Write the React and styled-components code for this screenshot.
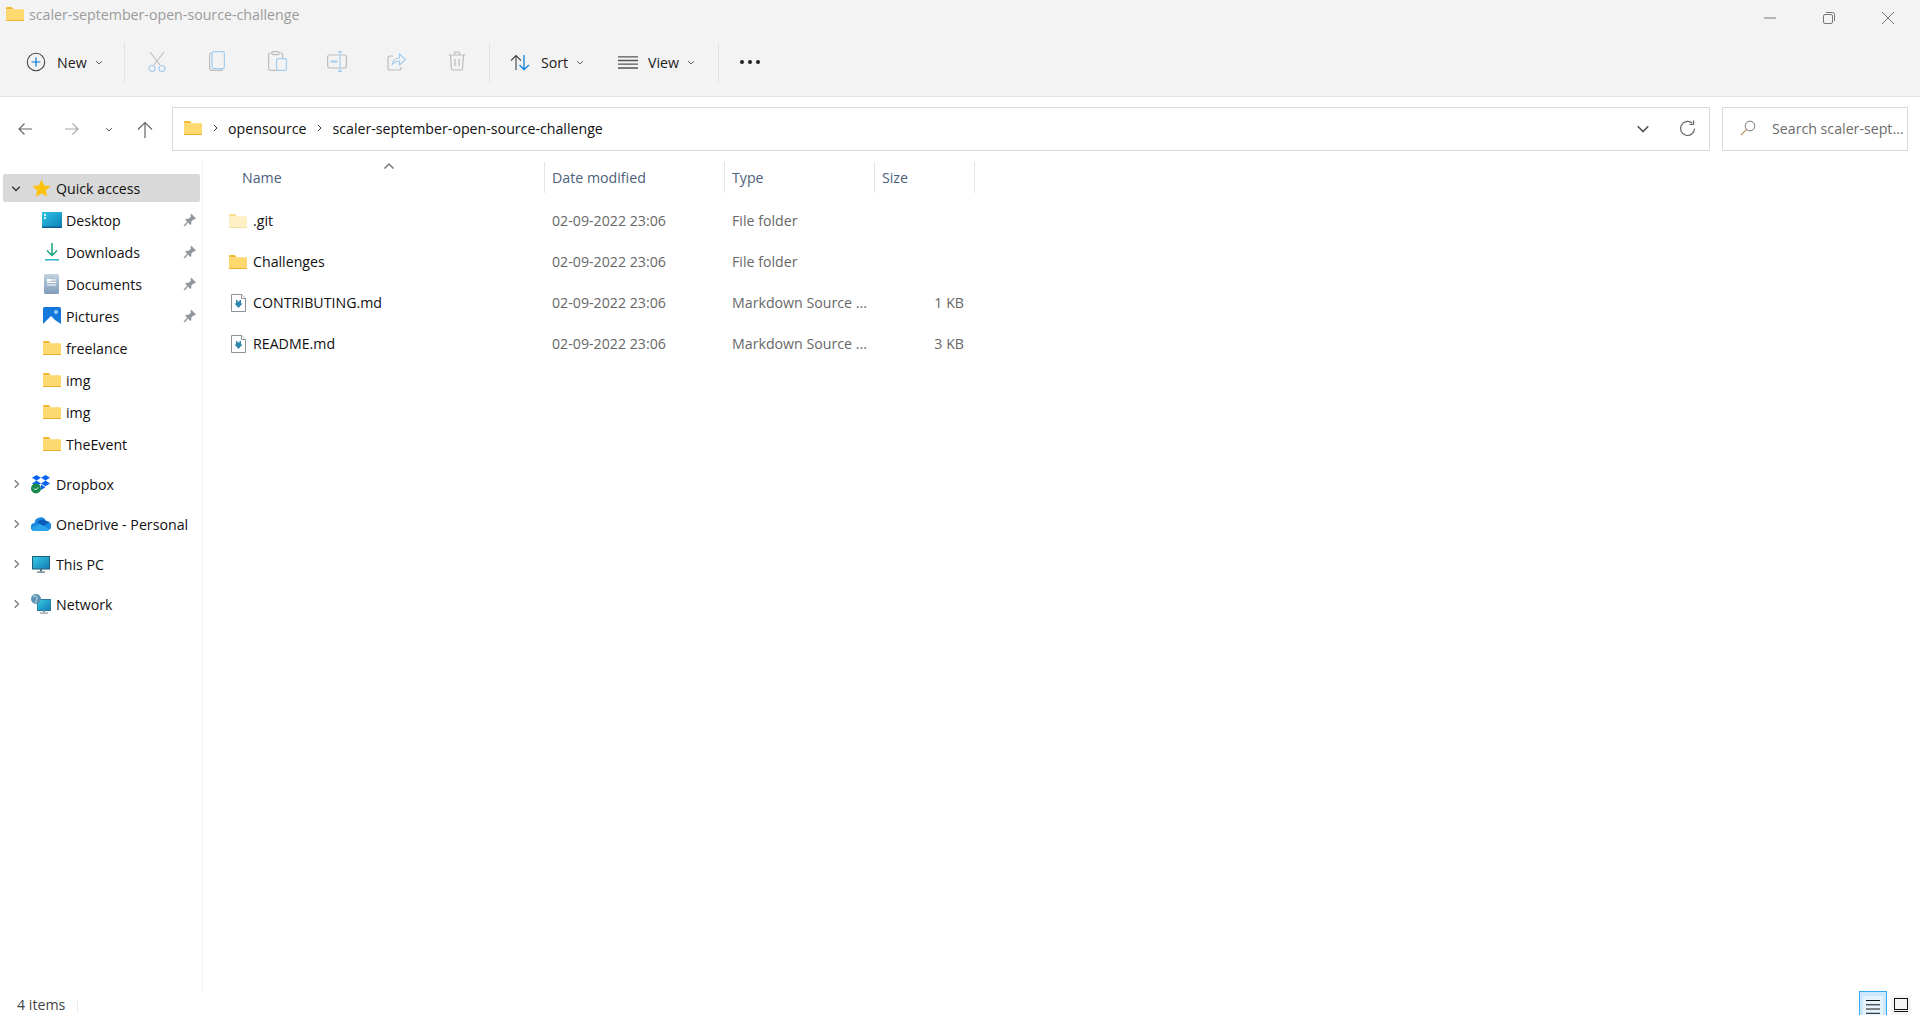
import styled, { createGlobalStyle } from 'styled-components';

const GlobalStyle = createGlobalStyle`
  html, body { margin: 0; padding: 0; background: #fff; }
  * { box-sizing: border-box; }
`;

const Window = styled.div`
  width: 1920px;
  height: 1015px;
  display: flex;
  flex-direction: column;
  overflow: hidden;
  background: #fff;
  font-family: "Open Sans", "Noto Sans", sans-serif;
  font-size: 14.2px;
  color: #111;
`;

const Chrome = styled.div`
  height: 97px;
  flex: none;
  display: flex;
  flex-direction: column;
  background: #f3f3f3;
  border-bottom: 1px solid #e1e1e1;
`;

const TitleBar = styled.div`
  height: 30px;
  flex: none;
  display: flex;
  align-items: center;
  padding-left: 6px;
  padding-bottom: 2px;
  gap: 5px;
  color: #9b9b9b;
`;

const TitleText = styled.span`
  flex: 1;
`;

const WindowButtons = styled.div`
  display: flex;
  align-items: center;
  padding-right: 26px;
  gap: 47px;
  margin-top: 8px;
`;

const Toolbar = styled.div`
  flex: 1;
  display: flex;
  align-items: center;
  padding-bottom: 2px;
`;

const Separator = styled.div`
  width: 1px;
  height: 39px;
  background: #e2e2e2;
`;

const ToolButton = styled.div`
  display: flex;
  align-items: center;
  flex: none;
  width: ${p => p.$width}px;
  padding-left: ${p => p.$pad}px;
`;

const ToolLabel = styled.span`
  margin-left: ${p => p.$gap}px;
  width: ${p => p.$width}px;
  color: #1b1b1b;
`;

const DisabledTool = styled.div`
  width: 60px;
  flex: none;
  display: flex;
  justify-content: center;
`;

const DisabledGroup = styled.div`
  display: flex;
  margin-left: 2px;
  margin-right: 2px;
`;

const Dots = styled.div`
  display: flex;
  gap: 4px;
  margin-left: 21px;
`;

const Dot = styled.span`
  width: 4px;
  height: 4px;
  border-radius: 50%;
  background: #222;
`;

const NavBar = styled.div`
  height: 65px;
  flex: none;
  display: flex;
  align-items: flex-start;
  padding-top: 10px;
`;

const NavButtons = styled.div`
  width: 172px;
  height: 44px;
  flex: none;
  display: grid;
  grid-template-columns: 50px 44px 30px 42px;
  align-items: center;
`;

const NavSlot = styled.div`
  display: flex;
  justify-content: center;
`;

const AddressBox = styled.div`
  width: 1538px;
  height: 44px;
  flex: none;
  display: flex;
  align-items: center;
  padding: 0 13px 2px 11px;
  border: 1px solid #d9d9d9;
  background: #fff;
`;

const Crumb = styled.span`
  color: #111;
`;

const CrumbSep = styled.span`
  display: flex;
  width: 26px;
  justify-content: center;
`;

const AddressEnd = styled.div`
  margin-left: auto;
  display: flex;
  align-items: center;
  gap: 29px;
`;

const SearchBox = styled.div`
  width: 186px;
  height: 44px;
  flex: none;
  margin-left: 12px;
  display: flex;
  align-items: center;
  padding: 0 0 2px 17px;
  gap: 16px;
  border: 1px solid #d9d9d9;
  color: #6c6c6c;
  white-space: nowrap;
`;

const Body = styled.div`
  flex: 1;
  min-height: 0;
  display: flex;
`;

const Sidebar = styled.nav`
  width: 203px;
  flex: none;
  padding-top: 10px;
  border-right: 1px solid #f0f0f0;
`;

const QuickRow = styled.div`
  height: 28px;
  margin: 2px 2px 2px 3px;
  border-radius: 2px;
  background: #d9d9d9;
  display: flex;
  align-items: center;
  padding-left: 7px;
`;

const TreeRow = styled.div`
  height: 40px;
  display: flex;
  align-items: center;
  padding-left: 10px;
`;

const Arrow = styled.span`
  width: 12px;
  display: flex;
  justify-content: center;
  flex: none;
`;

const TreeIcon = styled.span`
  width: 22px;
  margin-left: 8px;
  margin-right: 4px;
  display: flex;
  justify-content: center;
  flex: none;
`;

const PinnedRow = styled.div`
  height: 32px;
  display: flex;
  align-items: center;
  padding-left: 41px;
`;

const PinnedIcon = styled.span`
  width: 21px;
  margin-right: 4px;
  display: flex;
  justify-content: center;
  flex: none;
`;

const RowLabel = styled.span`
  flex: 1;
`;

const PinSlot = styled.span`
  display: flex;
  margin-right: 5px;
`;

const TreeGroup = styled.div`
  margin-top: 4px;
`;

const Files = styled.main`
  flex: 1;
  position: relative;
`;

const SortMark = styled.span`
  position: absolute;
  left: 180px;
  top: -1px;
  display: flex;
`;

const HeaderRow = styled.div`
  display: grid;
  grid-template-columns: 341px 180px 150px 100px 1px;
  height: 31px;
  margin-bottom: 7px;
  color: #4c607a;
`;

const HeaderCell = styled.div`
  display: flex;
  align-items: center;
  padding-left: ${p => p.$pad || 7}px;
  border-left: ${p => (p.$bare ? 'none' : '1px solid #e5e5e5')};
`;

const FileRow = styled.div`
  display: grid;
  grid-template-columns: 341px 180px 150px 100px;
  height: 41px;
  align-items: center;
`;

const NameCell = styled.div`
  display: flex;
  align-items: center;
  padding-left: 26px;
  gap: 6px;
  color: #111;
`;

const FileIcon = styled.span`
  width: 18px;
  display: flex;
  justify-content: center;
`;

const DataCell = styled.div`
  padding-left: 8px;
  color: #676767;
  white-space: nowrap;
`;

const SizeCell = styled.div`
  text-align: right;
  padding-right: 10px;
  color: #676767;
`;

const StatusBar = styled.footer`
  height: 25px;
  flex: none;
  display: flex;
  align-items: flex-start;
  padding-left: 17px;
  color: #444;
`;

const StatusText = styled.span`
  margin-top: 5px;
`;

const StatusDivider = styled.span`
  width: 1px;
  height: 14px;
  background: #eee;
  margin: 9px 0 0 12px;
`;

const ViewToggles = styled.div`
  margin-left: auto;
  margin-top: 1px;
  display: flex;
  gap: 4px;
  padding-right: 9px;
`;

const ActiveToggle = styled.div`
  width: 28px;
  height: 26px;
  display: flex;
  justify-content: center;
  padding-top: 4px;
  background: #cce8ff;
  border: 1px solid #3aa8ec;
`;

const ToggleInner = styled.div`
  width: 20px;
  height: 22px;
  display: flex;
  justify-content: center;
  padding-top: 3px;
  background: #e5f3ff;
`;

const PlainToggle = styled.div`
  width: 20px;
  height: 26px;
  margin-top: 4px;
  display: flex;
  justify-content: center;
  padding-top: 3px;
  background: #f5f5f5;
`;

const Svg = ({ w, h, children, box }) => (
  <svg width={w} height={h} viewBox={box || `0 0 ${w} ${h}`} fill="none">
    {children}
  </svg>
);

const chevronPaths = {
  down: 'M1 3l3 3 3-3',
  right: 'M3 1l3 3-3 3',
  up: 'M1 5l3-3 3 3',
};

const Chevron = ({ dir = 'down', size = 8, color = '#666', width = 1 }) => (
  <Svg w={size} h={size} box="0 0 8 8">
    <path d={chevronPaths[dir]} stroke={color} strokeWidth={width} />
  </Svg>
);

const Folder = ({ pale, w = 18, h = 14 }) => (
  <Svg w={w} h={h} box="0 0 18 14">
    <path d="M0 1.2C0 .5.5 0 1.2 0h4.6l2 2.2H0z" fill={pale ? '#f8dc8e' : '#f4b62c'} />
    <rect y="2.2" width="18" height="11.8" rx="0.6" fill={pale ? '#fff0c4' : '#fdd96f'} />
    <rect y="13" width="18" height="1" fill={pale ? '#f7dfa0' : '#eeb031'} />
  </Svg>
);

const MdFile = () => (
  <Svg w={15} h={18}>
    <path d="M.5.5h10.2l3.800 3.800v13.200H.5z" fill="#fff" stroke="#8a9299" />
    <path d="M10.500.5v4h4" stroke="#8a9299" fill="#fff" />
    <path d="M5 6h1.500v1.500h2V6H10v3.500h1.500L7.500 14l-4-4.500H5z" fill="#2f86ad" />
  </Svg>
);

const Pin = () => (
  <Svg w={14} h={14}>
    <path d="M8.400.8l4.600 4.600-1.200 1-1-.2-2.600 2.600.2 2.200-1 1L2.200 6.800l1-1 2.200.2L8 3.400l-.6-1.400z" fill="#8f969d" />
    <path d="M4.600 9.200L1 13" stroke="#8f969d" strokeWidth="1.300" />
  </Svg>
);

const Star = () => (
  <Svg w={19} h={18}>
    <path d="M9.500.5l2.700 5.900 6.400.7-4.800 4.300 1.400 6.300-5.700-3.300-5.700 3.300 1.400-6.300L.4 7.100l6.400-.7z" fill="#fdc20f" />
  </Svg>
);

const DesktopIcon = () => (
  <Svg w={20} h={16}>
    <defs>
      <linearGradient id="desk" x1="0" y1="0" x2="1" y2="1">
        <stop offset="0" stopColor="#2fc4e6" />
        <stop offset="1" stopColor="#0b7fb5" />
      </linearGradient>
    </defs>
    <rect width="20" height="16" rx="1" fill="url(#desk)" />
    <rect y="14.500" width="20" height="1.500" fill="#0f5f93" />
    <rect x="2" y="2" width="2" height="2" fill="#d8f3fb" />
    <rect x="2" y="5" width="2" height="2" fill="#d8f3fb" />
  </Svg>
);

const DownloadIcon = () => (
  <Svg w={16} h={20}>
    <path d="M8 1v12M3 8.500l5 5 5-5" stroke="#17a57c" strokeWidth="1.500" />
    <rect x="1" y="17" width="14" height="1.500" fill="#2ab5c6" />
  </Svg>
);

const DocumentIcon = () => (
  <Svg w={15} h={20}>
    <defs>
      <linearGradient id="docg" x1="0" y1="0" x2="0" y2="1">
        <stop offset="0" stopColor="#c3d2e2" />
        <stop offset="1" stopColor="#7f9cba" />
      </linearGradient>
    </defs>
    <rect width="15" height="20" rx="1.500" fill="url(#docg)" />
    <path d="M3 6h9M3 8.500h9M3 11h9" stroke="#fff" />
    <rect x="3" y="5" width="4" height="2.500" fill="#fff" />
  </Svg>
);

const PicturesIcon = () => (
  <Svg w={18} h={18}>
    <rect width="18" height="18" rx="1.500" fill="#1478dc" />
    <circle cx="13" cy="5" r="2" fill="#8fd0fa" />
    <path d="M0 17l8-8 4 4 6 4v1H0z" fill="#fff" />
  </Svg>
);

const DropboxIcon = () => (
  <Svg w={20} h={19}>
    <path d="M5.500 0l4.500 2.800-4.500 2.800L1 2.800zM14.500 0L19 2.800l-4.500 2.800L10 2.800zM5.500 5.600L10 8.400l-4.500 2.800L1 8.400zM14.500 5.600L19 8.400l-4.500 2.800L10 8.400zM10 9.500l4.500 2.800L10 15z" fill="#0a62f0" />
    <circle cx="5" cy="13.500" r="5" fill="#1a8a4c" />
    <path d="M3 13.500l1.500 1.500 2.500-2.500" stroke="#fff" />
  </Svg>
);

const CloudIcon = () => (
  <Svg w={20} h={14}>
    <path d="M4 14a4 4 0 01-.5-8A6 6 0 0115 4a4.500 4.500 0 01.500 10z" fill="#1a8ae0" />
    <path d="M6 5.500A6 6 0 0115 4a4 4 0 013 1.500L12 9z" fill="#0b5cb8" />
    <path d="M4 14a4 4 0 01-3-3l8-4 9 5c-.5 1-1.500 2-2.500 2z" fill="#2aa5ec" />
  </Svg>
);

const MonitorIcon = () => (
  <Svg w={18} h={17}>
    <defs>
      <linearGradient id="mon" x1="0" y1="0" x2="1" y2="1">
        <stop offset="0" stopColor="#35cfe6" />
        <stop offset="1" stopColor="#1379b5" />
      </linearGradient>
    </defs>
    <rect x=".5" y=".5" width="17" height="12.500" fill="url(#mon)" stroke="#225c7d" />
    <rect x="8" y="13" width="2" height="2.500" fill="#58707f" />
    <rect x="5" y="15.500" width="8" height="1.200" fill="#58707f" />
  </Svg>
);

const NetworkIcon = () => (
  <Svg w={20} h={20}>
    <defs>
      <linearGradient id="net" x1="0" y1="0" x2="1" y2="1">
        <stop offset="0" stopColor="#35cfe6" />
        <stop offset="1" stopColor="#1379b5" />
      </linearGradient>
    </defs>
    <rect x="6.500" y="5.500" width="13" height="11" fill="url(#net)" stroke="#2a7da3" />
    <rect x="12" y="16.500" width="2" height="2" fill="#8a98a2" />
    <rect x="9" y="18.500" width="8" height="1.200" fill="#8a98a2" />
    <circle cx="5" cy="5" r="5" fill="#5c93b5" />
    <path d="M2 3c2-2 4-1 4 1s-2 3-1 5" stroke="#d5e6f0" />
  </Svg>
);

const NewIcon = () => (
  <Svg w={20} h={20}>
    <circle cx="10" cy="10" r="8.700" stroke="#444" strokeWidth="1.100" />
    <path d="M10 5.500v9M5.500 10h9" stroke="#0078d4" strokeWidth="1.200" />
  </Svg>
);

const GRAY = '#bdbdbd';
const PALE = '#a5cdee';

const CutIcon = () => (
  <Svg w={20} h={22}>
    <path d="M3 1l10 13M17 1L7 14" stroke={GRAY} strokeWidth="1.100" />
    <circle cx="5" cy="17.500" r="3" stroke={PALE} strokeWidth="1.200" />
    <circle cx="15" cy="17.500" r="3" stroke={PALE} strokeWidth="1.200" />
  </Svg>
);

const CopyIcon = () => (
  <Svg w={16} h={20}>
    <rect x=".6" y="2" width="13" height="17.400" rx="2" stroke={GRAY} strokeWidth="1.200" />
    <rect x="3" y=".6" width="12.400" height="17" rx="1.800" fill="#f3f3f3" stroke={PALE} strokeWidth="1.200" />
  </Svg>
);

const PasteIcon = () => (
  <Svg w={19} h={20}>
    <rect x=".6" y="2" width="14" height="17.400" rx="2" stroke={GRAY} strokeWidth="1.200" />
    <rect x="4" y=".6" width="7" height="3" rx="1" fill="#f3f3f3" stroke={GRAY} strokeWidth="1.100" />
    <rect x="8.600" y="7.600" width="9.800" height="11.800" rx="1.500" fill="#f3f3f3" stroke={PALE} strokeWidth="1.200" />
  </Svg>
);

const RenameIcon = () => (
  <Svg w={20} h={21}>
    <rect x=".6" y="4" width="18.800" height="13" rx="2" stroke={GRAY} strokeWidth="1.200" />
    <rect x="3.500" y="9.500" width="7" height="2" fill={PALE} />
    <rect x="12.200" y="2" width="1.600" height="17" fill="#f3f3f3" />
    <path d="M13 1v19M11 .6h4M11 20.400h4" stroke={PALE} strokeWidth="1.200" />
  </Svg>
);

const ShareIcon = () => (
  <Svg w={20} h={20}>
    <path d="M6 5H3a2 2 0 00-2 2v10a2 2 0 002 2h9a2 2 0 002-2v-1" stroke={GRAY} strokeWidth="1.200" />
    <path d="M5.500 13c.5-4 3-6 7-6V3l6 5.500-6 5.500v-4c-3 0-5 1-7 3z" stroke={PALE} strokeWidth="1.200" fill="#f3f3f3" />
  </Svg>
);

const TrashIcon = () => (
  <Svg w={18} h={20}>
    <path d="M.5 4h17M6.500 4V2a1 1 0 011-1h3a1 1 0 011 1v2" stroke={GRAY} strokeWidth="1.200" />
    <path d="M2.500 4l1 13.500a1.500 1.500 0 001.500 1.500h8a1.500 1.500 0 001.500-1.500l1-13.500" stroke={GRAY} strokeWidth="1.200" />
    <path d="M7 8v7M11 8v7" stroke={GRAY} strokeWidth="1.200" />
  </Svg>
);

const SortIcon = () => (
  <Svg w={21} h={17}>
    <path d="M6 16V1.500M1 6.500l5-5 5 5" stroke="#444" strokeWidth="1.100" />
    <path d="M14 1v14.500M9.500 11l4.500 4.500 5-4.500" stroke="#0f84d8" strokeWidth="1.300" />
  </Svg>
);

const LinesIcon = () => (
  <Svg w={20} h={13}>
    <path d="M0 .8h20M0 4.500h20M0 8.200h20M0 12h20" stroke="#555" strokeWidth="1.300" />
  </Svg>
);

const ListGlyph = () => (
  <Svg w={14} h={18}>
    <path d="M0 1.500h14M0 5.800h14M0 10h14M0 14.300h14" stroke="#111" />
  </Svg>
);

const TilesGlyph = () => (
  <Svg w={14} h={16}>
    <rect x=".5" y=".5" width="13" height="11" stroke="#111" />
    <path d="M0 13.500h14" stroke="#111" />
  </Svg>
);

const ArrowLeft = ({ color = '#666', flip }) => (
  <Svg w={16} h={14}>
    <path d={flip ? 'M1 7h13M8.500 1.500L14 7l-5.500 5.500' : 'M15 7H2M7.500 1.500L2 7l5.500 5.500'} stroke={color} strokeWidth="1.200" />
  </Svg>
);

const ArrowUp = () => (
  <Svg w={16} h={17}>
    <path d="M8 17V1.500M1 8.500l7-7 7 7" stroke="#666" strokeWidth="1.200" />
  </Svg>
);

const RefreshIcon = () => (
  <Svg w={17} h={17}>
    <path d="M15.500 8.500a7 7 0 11-2.300-5.200" stroke="#666" strokeWidth="1.200" />
    <path d="M14.500.5v4h-4" stroke="#666" strokeWidth="1.200" />
  </Svg>
);

const SearchIcon = () => (
  <Svg w={16} h={16}>
    <circle cx="10" cy="6" r="4.800" stroke="#777" />
    <path d="M6.500 9.500L1 15" stroke="#c59a6a" strokeWidth="1.200" />
  </Svg>
);

const pinned = [
  { label: 'Desktop', icon: <DesktopIcon />, pin: true },
  { label: 'Downloads', icon: <DownloadIcon />, pin: true },
  { label: 'Documents', icon: <DocumentIcon />, pin: true },
  { label: 'Pictures', icon: <PicturesIcon />, pin: true },
  { label: 'freelance', icon: <Folder /> },
  { label: 'img', icon: <Folder /> },
  { label: 'img', icon: <Folder /> },
  { label: 'TheEvent', icon: <Folder /> },
];

const tree = [
  { label: 'Dropbox', icon: <DropboxIcon /> },
  { label: 'OneDrive - Personal', icon: <CloudIcon /> },
  { label: 'This PC', icon: <MonitorIcon /> },
  { label: 'Network', icon: <NetworkIcon /> },
];

const files = [
  { name: '.git', icon: <Folder pale />, type: 'File folder' },
  { name: 'Challenges', icon: <Folder />, type: 'File folder' },
  { name: 'CONTRIBUTING.md', icon: <MdFile />, type: 'Markdown Source ...', size: '1 KB' },
  { name: 'README.md', icon: <MdFile />, type: 'Markdown Source ...', size: '3 KB' },
];

const disabledTools = [<CutIcon />, <CopyIcon />, <PasteIcon />, <RenameIcon />, <ShareIcon />, <TrashIcon />];

export default function App() {
  return (
    <Window>
      <GlobalStyle />
      <Chrome>
        <TitleBar>
          <Folder />
          <TitleText>scaler-september-open-source-challenge</TitleText>
          <WindowButtons>
            <Svg w={12} h={12}><path d="M0 6h12" stroke="#777" /></Svg>
            <Svg w={12} h={12}>
              <rect x=".5" y="2.500" width="9" height="9" rx="1.500" stroke="#777" />
              <path d="M3 .5h6.500a2 2 0 012 2V9" stroke="#777" />
            </Svg>
            <Svg w={12} h={12}><path d="M0 0l12 12M12 0L0 12" stroke="#777" /></Svg>
          </WindowButtons>
        </TitleBar>
        <Toolbar>
          <ToolButton $width={124} $pad={26}>
            <NewIcon />
            <ToolLabel $gap={11} $width={38}>New</ToolLabel>
            <Chevron />
          </ToolButton>
          <Separator />
          <DisabledGroup>
            {disabledTools.map((icon, i) => (
              <DisabledTool key={i}>{icon}</DisabledTool>
            ))}
          </DisabledGroup>
          <Separator />
          <ToolButton $width={117} $pad={20}>
            <SortIcon />
            <ToolLabel $gap={10} $width={35}>Sort</ToolLabel>
            <Chevron />
          </ToolButton>
          <ToolButton $width={111} $pad={11}>
            <LinesIcon />
            <ToolLabel $gap={10} $width={39}>View</ToolLabel>
            <Chevron />
          </ToolButton>
          <Separator />
          <Dots>
            <Dot />
            <Dot />
            <Dot />
          </Dots>
        </Toolbar>
      </Chrome>
      <NavBar>
        <NavButtons>
          <NavSlot><ArrowLeft /></NavSlot>
          <NavSlot><ArrowLeft flip color="#aaa" /></NavSlot>
          <NavSlot><Chevron /></NavSlot>
          <NavSlot><ArrowUp /></NavSlot>
        </NavButtons>
        <AddressBox>
          <Folder />
          <CrumbSep><Chevron dir="right" color="#444" /></CrumbSep>
          <Crumb>opensource</Crumb>
          <CrumbSep><Chevron dir="right" color="#444" /></CrumbSep>
          <Crumb>scaler-september-open-source-challenge</Crumb>
          <AddressEnd>
            <Chevron size={14} color="#555" />
            <RefreshIcon />
          </AddressEnd>
        </AddressBox>
        <SearchBox>
          <SearchIcon />
          Search scaler-sept...
        </SearchBox>
      </NavBar>
      <Body>
        <Sidebar>
          <QuickRow>
            <Arrow><Chevron size={10} color="#333" /></Arrow>
            <TreeIcon><Star /></TreeIcon>
            <RowLabel>Quick access</RowLabel>
          </QuickRow>
          {pinned.map((item, i) => (
            <PinnedRow key={i}>
              <PinnedIcon>{item.icon}</PinnedIcon>
              <RowLabel>{item.label}</RowLabel>
              {item.pin && <PinSlot><Pin /></PinSlot>}
            </PinnedRow>
          ))}
          <TreeGroup>
            {tree.map(item => (
              <TreeRow key={item.label}>
                <Arrow><Chevron dir="right" size={10} color="#777" /></Arrow>
                <TreeIcon>{item.icon}</TreeIcon>
                <RowLabel>{item.label}</RowLabel>
              </TreeRow>
            ))}
          </TreeGroup>
        </Sidebar>
        <Files>
          <SortMark><Chevron dir="up" size={12} color="#777" /></SortMark>
          <HeaderRow>
            <HeaderCell $bare $pad={39}>Name</HeaderCell>
            <HeaderCell>Date modified</HeaderCell>
            <HeaderCell>Type</HeaderCell>
            <HeaderCell>Size</HeaderCell>
            <HeaderCell />
          </HeaderRow>
          {files.map(file => (
            <FileRow key={file.name}>
              <NameCell>
                <FileIcon>{file.icon}</FileIcon>
                {file.name}
              </NameCell>
              <DataCell>02-09-2022 23:06</DataCell>
              <DataCell>{file.type}</DataCell>
              <SizeCell>{file.size}</SizeCell>
            </FileRow>
          ))}
        </Files>
      </Body>
      <StatusBar>
        <StatusText>4 items</StatusText>
        <StatusDivider />
        <ViewToggles>
          <ActiveToggle>
            <ToggleInner><ListGlyph /></ToggleInner>
          </ActiveToggle>
          <PlainToggle><TilesGlyph /></PlainToggle>
        </ViewToggles>
      </StatusBar>
    </Window>
  );
}
